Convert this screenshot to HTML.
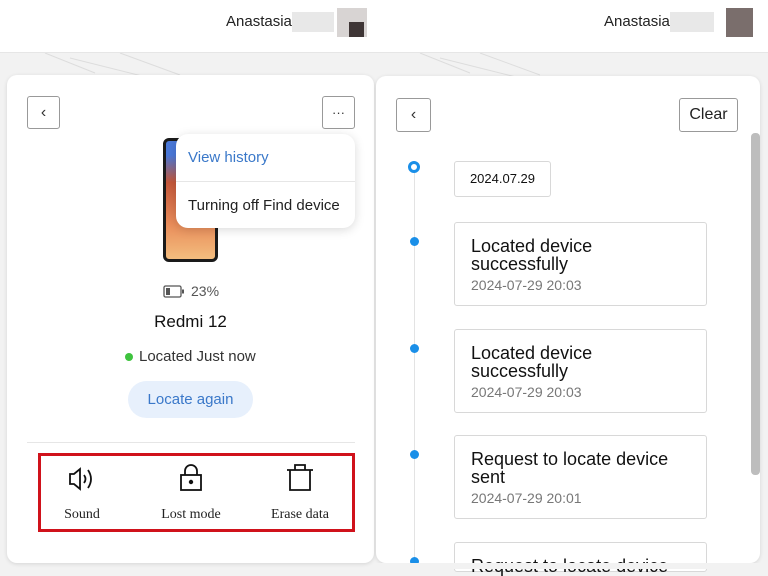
<!DOCTYPE html>
<html><head><meta charset="utf-8"><style>
*{box-sizing:border-box;margin:0;padding:0}
body{width:768px;height:569px;overflow:hidden;background:#f2f2f2;font-family:"Liberation Sans","DejaVu Sans",sans-serif;position:relative;color:#111}
.hdr{position:absolute;left:0;top:0;width:768px;height:53px;background:#fff;border-bottom:1px solid #e6e6e6}
.name{position:absolute;top:13px;font-size:15px;color:#222}
.blur{position:absolute;background:#e4e4e4}
.panel{position:absolute;background:#fff;border-radius:10px;box-shadow:0 1px 4px rgba(0,0,0,.12)}
.btn{position:absolute;border:1px solid #999;border-radius:3px;background:#fff;display:flex;align-items:center;justify-content:center;font-size:16px;color:#333}
.abs{position:absolute}
.card{position:absolute;left:454px;width:253px;height:84px;border:1px solid #d8d8d8;border-radius:3px;background:#fff;padding:14px 16px}
.card .t{font-size:18px;line-height:18px;color:#111;max-width:212px}
.card .d{font-size:14px;color:#777;margin-top:4px}
.dot{position:absolute;left:410px;width:9px;height:9px;border-radius:50%;background:#1a8fe8}
.lbl{position:absolute;font-family:"Liberation Serif",serif;font-size:14px;color:#222;text-align:center;width:100px}
</style></head><body>
<div class="hdr">
 <div class="name" style="left:226px">Anastasia</div>
 <div class="blur" style="left:292px;top:12px;width:42px;height:20px;background:#e8e8e8"></div>
 <div class="blur" style="left:337px;top:8px;width:30px;height:29px;background:#d8d4d3"></div>
 <div class="blur" style="left:349px;top:22px;width:15px;height:15px;background:#3f3636"></div>
 <div class="name" style="left:604px">Anastasia</div>
 <div class="blur" style="left:670px;top:12px;width:44px;height:20px;background:#e8e8e8"></div>
 <div class="blur" style="left:726px;top:8px;width:27px;height:29px;background:#7a6e6c"></div>
</div>
<svg class="abs" style="left:0;top:53px" width="768" height="30"><g stroke="#ddd" fill="none"><path d="M45 0 L95 20 M70 5 L150 25 M120 0 L180 22 M420 0 L470 20 M440 5 L520 25 M480 0 L540 22"/></g></svg>

<div class="panel" style="left:7px;top:75px;width:367px;height:488px"></div>
<div class="btn" style="left:27px;top:96px;width:33px;height:33px">‹</div>
<div class="btn" style="left:322px;top:96px;width:33px;height:33px;font-size:13px;line-height:10px">···</div>
<div class="abs" style="left:163px;top:138px;width:55px;height:124px;border:3px solid #1a1a1a;border-radius:6px;background:linear-gradient(180deg,#4a78d8 0%,#4a78d8 12%,#c4573a 35%,#e98c5a 70%,#f3bd7e 100%)"></div>
<div class="abs" style="left:176px;top:134px;width:179px;height:94px;background:#fff;border-radius:12px;box-shadow:0 2px 10px rgba(0,0,0,.15)">
 <div style="position:absolute;left:12px;top:15px;font-size:15px;color:#3a78c9">View history</div>
 <div style="position:absolute;left:0;top:47px;width:179px;border-top:1px solid #e6e6e6"></div>
 <div style="position:absolute;left:12px;top:63px;font-size:15px;color:#222">Turning off Find device</div>
</div>
<svg class="abs" style="left:163px;top:285px" width="22" height="13"><rect x="1" y="1" width="17" height="11" rx="1.5" fill="none" stroke="#555" stroke-width="1.3"/><rect x="3" y="3" width="4" height="7" fill="#555"/><rect x="19" y="4.5" width="2" height="4" fill="#555"/></svg>
<div class="abs" style="left:191px;top:283px;font-size:14px;color:#555">23%</div>
<div class="abs" style="left:7px;width:367px;top:312px;text-align:center;font-size:17px;color:#111">Redmi 12</div>
<div class="abs" style="left:125px;top:353px;width:8px;height:8px;border-radius:50%;background:#3ec33e"></div>
<div class="abs" style="left:139px;top:348px;font-size:15px;color:#333">Located Just now</div>
<div class="abs" style="left:128px;top:381px;width:125px;height:37px;border-radius:19px;background:#e7f0fc;color:#3a78c9;font-size:15px;text-align:center;line-height:37px">Locate again</div>
<div class="abs" style="left:27px;top:442px;width:328px;border-top:1px solid #e6e6e6"></div>
<div class="abs" style="left:38px;top:453px;width:317px;height:79px;border:3px solid #d0121b"></div>
<svg class="abs" style="left:68px;top:466px" width="28" height="26" fill="none" stroke="#111" stroke-width="1.8"><path d="M2 8 H6 L12 3 V23 L6 18 H2 Z"/><path d="M16 9 Q19 13 16 17"/><path d="M20 4 Q26 13 20 22"/></svg>
<svg class="abs" style="left:179px;top:463px" width="24" height="28" fill="none" stroke="#111" stroke-width="1.8"><path d="M6 12 V8 A6 6 0 0 1 18 8 V12"/><rect x="2" y="12" width="20" height="15"/><circle cx="12" cy="19" r="1.3" fill="#111"/></svg>
<svg class="abs" style="left:286px;top:464px" width="28" height="28" fill="none" stroke="#111" stroke-width="1.8"><path d="M1 6 H27 M9 6 V1 H19 V6"/><path d="M4 6 V26 H24 V6"/></svg>
<div class="lbl" style="left:32px;top:507px">Sound</div>
<div class="lbl" style="left:141px;top:507px">Lost mode</div>
<div class="lbl" style="left:250px;top:507px">Erase data</div>

<div class="panel" style="left:376px;top:76px;width:384px;height:487px;overflow:hidden">
<div class="btn" style="left:20px;top:22px;width:35px;height:34px">‹</div>
<div class="btn" style="left:303px;top:22px;width:59px;height:34px;font-size:16px;color:#222">Clear</div>
<div class="abs" style="left:375px;top:57px;width:9px;height:342px;background:#bdbdbd;border-radius:4px"></div>
<div class="abs" style="left:38px;top:90px;width:1px;height:397px;background:#e3e3e3"></div>
<div class="abs" style="left:32px;top:85px;width:12px;height:12px;border-radius:50%;border:3px solid #1a8fe8;background:#fff"></div>
<div class="abs" style="left:78px;top:85px;width:97px;height:36px;border:1px solid #d8d8d8;border-radius:3px;text-align:center;line-height:34px;font-size:13px">2024.07.29</div>
</div>
<div class="dot" style="top:237px"></div>
<div class="card" style="top:222px"><div class="t">Located device successfully</div><div class="d">2024-07-29 20:03</div></div>
<div class="dot" style="top:344px"></div>
<div class="card" style="top:329px"><div class="t">Located device successfully</div><div class="d">2024-07-29 20:03</div></div>
<div class="dot" style="top:450px"></div>
<div class="card" style="top:435px"><div class="t">Request to locate device sent</div><div class="d">2024-07-29 20:01</div></div>
<div class="dot" style="top:557px"></div>
<div class="card" style="top:542px;height:30px"><div class="t">Request to locate device</div></div>
<div class="abs" style="left:376px;top:563px;width:392px;height:6px;background:#f2f2f2"></div>
</body></html>
